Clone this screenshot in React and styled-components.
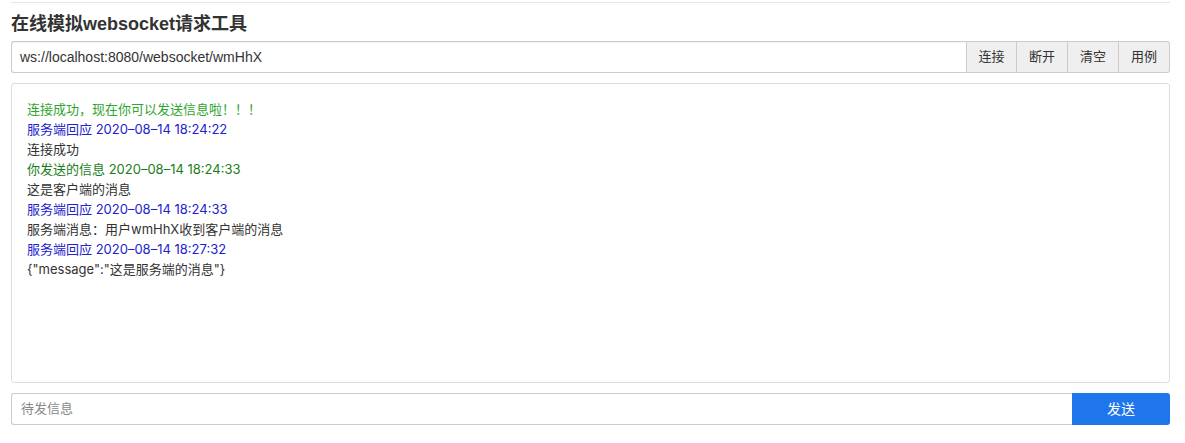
import styled, { createGlobalStyle } from "styled-components";

const GlobalStyle = createGlobalStyle`
  body {
    margin: 0;
    background: #fff;
    font-family: "Liberation Sans", "Noto Sans CJK SC", sans-serif;
    color: #333;
  }
`;

const Page = styled.div`
  width: 1159px;
  padding: 0 15px 0 11px;
`;

const TopEdge = styled.div`
  height: 2px;
  border-bottom: 1px solid #e6e6e6;
`;

const Title = styled.h3`
  margin: 0;
  padding-top: 8px;
  height: 30px;
  line-height: 26px;
  font-size: 18px;
  font-weight: bold;
  color: #333;
`;

const Row = styled.div`
  display: flex;
  height: 32px;
  box-sizing: border-box;
`;

const UrlInput = styled.div`
  flex: 1;
  border: 1px solid #ccc;
  border-right: none;
  border-radius: 3px 0 0 3px;
  padding: 0 8px;
  line-height: 30px;
  font-size: 14px;
  color: #333;
  box-shadow: inset 0 1px 1px rgba(0, 0, 0, 0.05);
`;

const ToolButton = styled.div`
  width: 51px;
  box-sizing: border-box;
  border: 1px solid #ccc;
  border-left: ${(p) => (p.$first ? "1px solid #ccc" : "none")};
  border-radius: ${(p) => (p.$last ? "0 3px 3px 0" : "0")};
  background: #efefef;
  text-align: center;
  line-height: 30px;
  font-size: 13px;
  color: #333;
`;

const Messages = styled.div`
  margin-top: 10px;
  height: 300px;
  box-sizing: border-box;
  border: 1px solid #ddd;
  border-radius: 3px;
  padding: 15px 15px;
  font-family: Inter, "Noto Sans CJK SC", sans-serif;
  font-size: 13px;
  line-height: 20px;
`;

const Line = styled.div`
  color: ${(p) => p.$color || "#333"};
`;

const SendRow = styled(Row)`
  margin-top: 10px;
`;

const MsgInput = styled.div`
  flex: 1;
  border: 1px solid #ccc;
  border-right: none;
  border-radius: 3px 0 0 3px;
  padding: 0 9px;
  line-height: 30px;
  font-size: 13px;
  color: #888;
`;

const SendButton = styled.div`
  width: 98px;
  background: #1f76ec;
  border-radius: 0 3px 3px 0;
  color: #fff;
  text-align: center;
  line-height: 32px;
  font-size: 14px;
`;

const lines = [
  { text: "连接成功，现在你可以发送信息啦！！！", color: "#2ea52e" },
  { text: "服务端回应 2020–08–14 18:24:22", color: "#2222cc" },
  { text: "连接成功" },
  { text: "你发送的信息 2020–08–14 18:24:33", color: "#1b7e1b" },
  { text: "这是客户端的消息" },
  { text: "服务端回应 2020–08–14 18:24:33", color: "#2222cc" },
  { text: "服务端消息：用户wmHhX收到客户端的消息" },
  { text: "服务端回应 2020–08–14 18:27:32", color: "#2222cc" },
  { text: '{"message":"这是服务端的消息"}' },
];

const buttons = ["连接", "断开", "清空", "用例"];

export default function App() {
  return (
    <>
      <GlobalStyle />
      <Page>
        <TopEdge />
        <Title>在线模拟websocket请求工具</Title>
        <Row>
          <UrlInput>ws://localhost:8080/websocket/wmHhX</UrlInput>
          {buttons.map((b, i) => (
            <ToolButton key={b} $first={i === 0} $last={i === buttons.length - 1}>
              {b}
            </ToolButton>
          ))}
        </Row>
        <Messages>
          {lines.map((l, i) => (
            <Line key={i} $color={l.color}>
              {l.text}
            </Line>
          ))}
        </Messages>
        <SendRow>
          <MsgInput>待发信息</MsgInput>
          <SendButton>发送</SendButton>
        </SendRow>
      </Page>
    </>
  );
}
